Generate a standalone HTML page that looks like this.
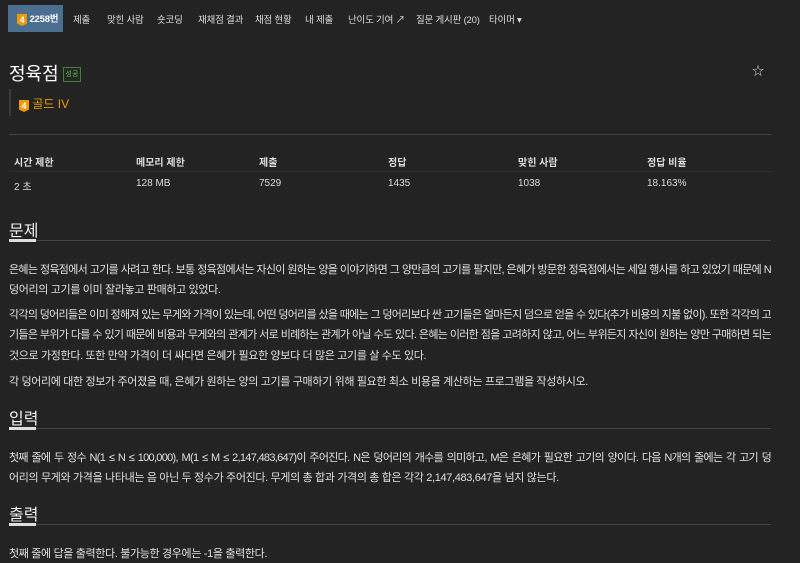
<!DOCTYPE html><html><head><meta charset="utf-8"><style>
*{margin:0;padding:0;box-sizing:border-box}
body{width:800px;height:563px;overflow:hidden;background:#232323;color:#ddd;font-family:"Liberation Sans","Noto Sans CJK KR",sans-serif;font-size:12px}
.nav{position:absolute;top:0;left:0;width:800px;height:36px}
.nav span{position:absolute;top:12px;font-size:9.5px;color:#ddd;white-space:nowrap;letter-spacing:-0.2px}
.act{position:absolute;left:8px;top:5px;width:55px;height:27px;background:#4b6e91}
.t{position:absolute;white-space:nowrap}
.tier{display:inline-block;width:10px;height:12px;background:#ec9a00;color:#fff;font-size:9px;font-weight:bold;text-align:center;line-height:12px;clip-path:polygon(0 0,100% 0,100% 80%,50% 100%,0 80%);vertical-align:-1px}
.hr{position:absolute;height:1px;background:#3a3a3a}
p.t{font-size:11px;letter-spacing:-0.35px;color:#e0e0e0}
p.j{width:762px;letter-spacing:-0.7px;text-align:justify;text-align-last:justify;overflow:hidden}
h2.t{font-size:16px;font-weight:normal;color:#eee}
</style></head><body>
<div class="nav">
<div class="act"></div>
<span style="left:17px;top:11px;font-weight:bold;color:#fff"><i class="tier" style="font-style:normal">4</i> 2258번</span>
<span style="left:73px">제출</span>
<span style="left:107px">맞힌 사람</span>
<span style="left:157px">숏코딩</span>
<span style="left:198px">재채점 결과</span>
<span style="left:255px">채점 현황</span>
<span style="left:305px">내 제출</span>
<span style="left:348px">난이도 기여 ↗</span>
<span style="left:416px">질문 게시판 (20)</span>
<span style="left:489px">타이머 ▾</span>
</div>
<div class="t" style="left:9px;top:60px;font-size:18px;color:#fff">정육점</div>
<div class="t" style="left:63px;top:67px;width:18px;height:15px;border:1px solid #4a7a45;background:#1d2a1c;color:#6db35f;font-size:7px;text-align:center;line-height:13px">성공</div>
<div class="t" style="left:752px;top:62px;font-size:12px;color:#ddd">☆</div>
<div style="position:absolute;left:9px;top:89px;width:2px;height:27px;background:#3a3a3a"></div>
<div class="t" style="left:19px;top:95px;font-size:12px;color:#ec9a00"><i class="tier" style="font-style:normal">4</i> 골드 IV</div>
<div class="hr" style="left:9px;top:134px;width:762px;background:#444"></div>
<div class="t" style="left:14px;top:154px;font-size:10px;font-weight:bold">시간 제한</div>
<div class="t" style="left:136px;top:154px;font-size:10px;font-weight:bold">메모리 제한</div>
<div class="t" style="left:259px;top:154px;font-size:10px;font-weight:bold">제출</div>
<div class="t" style="left:388px;top:154px;font-size:10px;font-weight:bold">정답</div>
<div class="t" style="left:518px;top:154px;font-size:10px;font-weight:bold">맞힌 사람</div>
<div class="t" style="left:647px;top:154px;font-size:10px;font-weight:bold">정답 비율</div>
<div class="hr" style="left:9px;top:171px;width:762px;background:#2e2e2e"></div>
<div class="t" style="left:14px;top:178px;font-size:10px">2 초</div>
<div class="t" style="left:136px;top:178px;font-size:10px">128 MB</div>
<div class="t" style="left:259px;top:178px;font-size:10px">7529</div>
<div class="t" style="left:388px;top:178px;font-size:10px">1435</div>
<div class="t" style="left:518px;top:178px;font-size:10px">1038</div>
<div class="t" style="left:647px;top:178px;font-size:10px">18.163%</div>
<h2 class="t" style="left:9px;top:217px">문제</h2>
<div class="hr" style="left:9px;top:240px;width:762px;background:#444"></div>
<div style="position:absolute;left:9px;top:239px;width:27px;height:3px;background:#ddd"></div>
<p class="t j" style="left:9px;top:261px">은혜는 정육점에서 고기를 사려고 한다. 보통 정육점에서는 자신이 원하는 양을 이야기하면 그 양만큼의 고기를 팔지만, 은혜가 방문한 정육점에서는 세일 행사를 하고 있었기 때문에 N</p>
<p class="t" style="left:9px;top:281px">덩어리의 고기를 이미 잘라놓고 판매하고 있었다.</p>
<p class="t j" style="left:9px;top:306px">각각의 덩어리들은 이미 정해져 있는 무게와 가격이 있는데, 어떤 덩어리를 샀을 때에는 그 덩어리보다 싼 고기들은 얼마든지 덤으로 얻을 수 있다(추가 비용의 지불 없이). 또한 각각의 고</p>
<p class="t j" style="left:9px;top:326px">기들은 부위가 다를 수 있기 때문에 비용과 무게와의 관계가 서로 비례하는 관계가 아닐 수도 있다. 은혜는 이러한 점을 고려하지 않고, 어느 부위든지 자신이 원하는 양만 구매하면 되는</p>
<p class="t" style="left:9px;top:347px">것으로 가정한다. 또한 만약 가격이 더 싸다면 은혜가 필요한 양보다 더 많은 고기를 살 수도 있다.</p>
<p class="t" style="left:9px;top:373px">각 덩어리에 대한 정보가 주어졌을 때, 은혜가 원하는 양의 고기를 구매하기 위해 필요한 최소 비용을 계산하는 프로그램을 작성하시오.</p>
<h2 class="t" style="left:9px;top:405px">입력</h2>
<div class="hr" style="left:9px;top:428px;width:762px;background:#444"></div>
<div style="position:absolute;left:9px;top:427px;width:27px;height:3px;background:#ddd"></div>
<p class="t j" style="left:9px;top:449px">첫째 줄에 두 정수 N(1 ≤ N ≤ 100,000), M(1 ≤ M ≤ 2,147,483,647)이 주어진다. N은 덩어리의 개수를 의미하고, M은 은혜가 필요한 고기의 양이다. 다음 N개의 줄에는 각 고기 덩</p>
<p class="t" style="left:9px;top:469px">어리의 무게와 가격을 나타내는 음 아닌 두 정수가 주어진다. 무게의 총 합과 가격의 총 합은 각각 2,147,483,647을 넘지 않는다.</p>
<h2 class="t" style="left:9px;top:501px">출력</h2>
<div class="hr" style="left:9px;top:524px;width:762px;background:#444"></div>
<div style="position:absolute;left:9px;top:523px;width:27px;height:3px;background:#ddd"></div>
<p class="t" style="left:9px;top:545px">첫째 줄에 답을 출력한다. 불가능한 경우에는 -1을 출력한다.</p>
</body></html>
